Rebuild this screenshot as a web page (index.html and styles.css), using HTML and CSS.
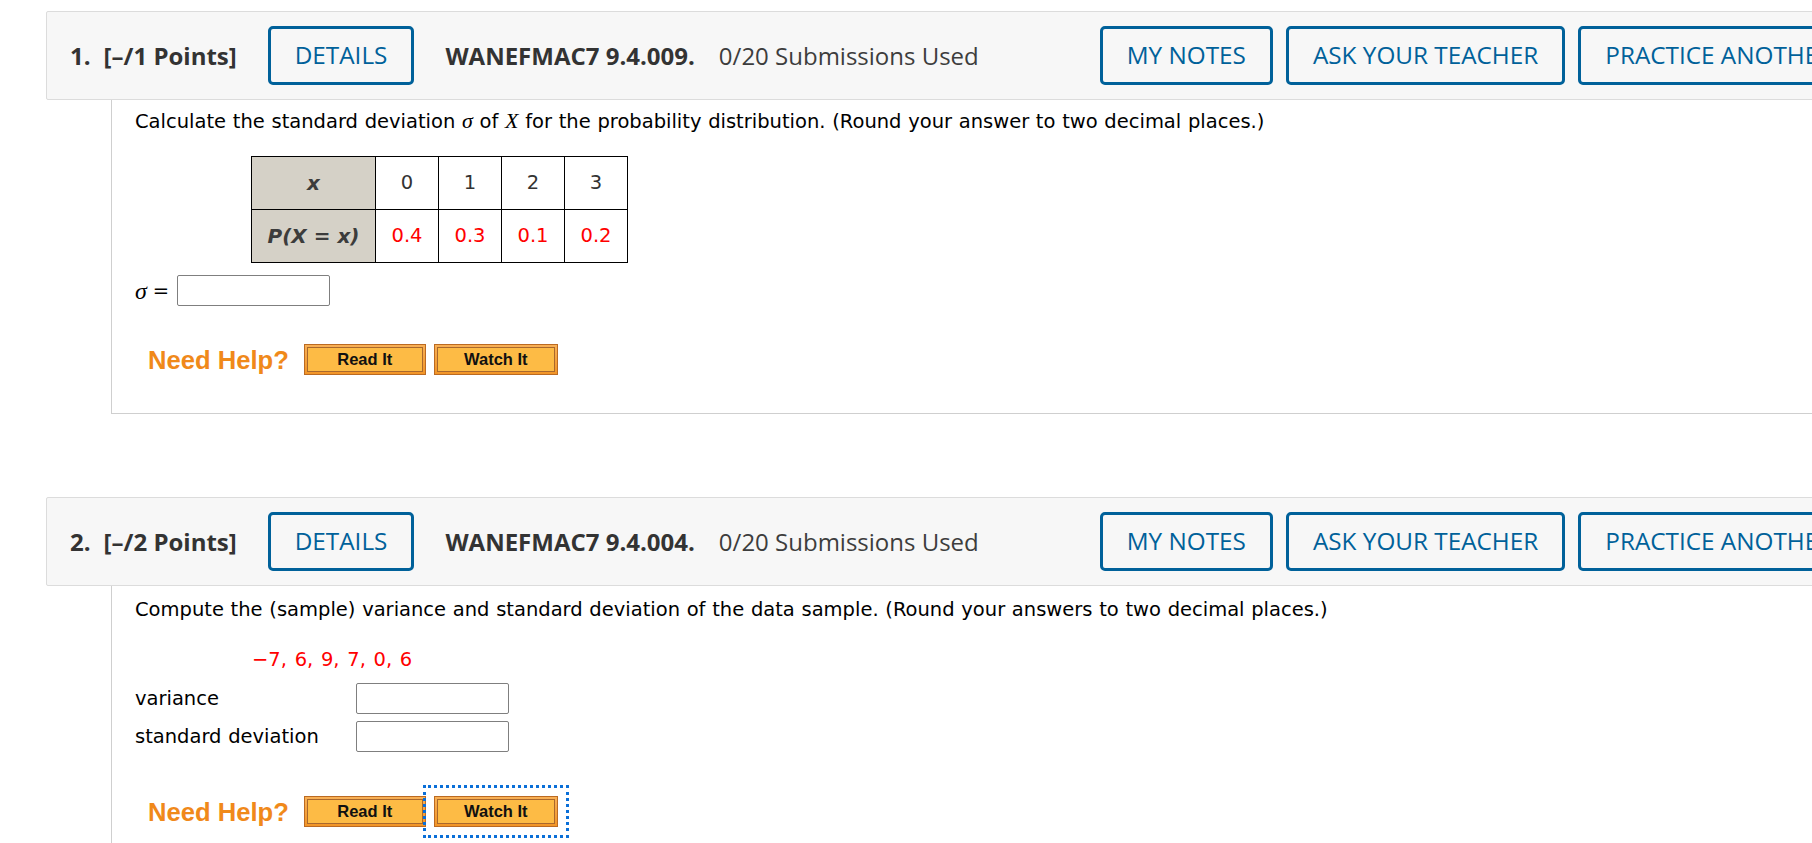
FILE: index.html
```html
<!DOCTYPE html>
<html lang="en">
<head>
<meta charset="utf-8">
<title>Questions</title>
<link rel="stylesheet" href="styles.css">
</head>
<body>
<div class="page">

  <section class="question">
    <div class="qhead">
      <span class="qnum">1.</span>
      <span class="qpts">[–/1 Points]</span>
      <button class="obtn">DETAILS</button>
      <span class="qcode">WANEFMAC7 9.4.009.</span>
      <span class="qsub">0/20 Submissions Used</span>
      <div class="qactions">
        <button class="obtn">MY NOTES</button>
        <button class="obtn">ASK YOUR TEACHER</button>
        <button class="obtn">PRACTICE ANOTHER</button>
      </div>
    </div>
    <div class="qbody">
      <p class="prompt">Calculate the standard deviation <span class="mvar">σ</span> of <span class="mvar">X</span> for the probability distribution. (Round your answer to two decimal places.)</p>
      <table class="dist">
        <tr>
          <th><i>x</i></th>
          <td>0</td><td>1</td><td>2</td><td>3</td>
        </tr>
        <tr>
          <th><i>P</i>(<i>X</i> = <i>x</i>)</th>
          <td class="red">0.4</td><td class="red">0.3</td><td class="red">0.1</td><td class="red">0.2</td>
        </tr>
      </table>
      <div class="answer">
        <span class="mvar big">σ</span><span class="eq">=</span><input class="ans" type="text">
      </div>
      <div class="help">
        <span class="needhelp">Need Help?</span>
        <button class="hbtn read"><span>Read It</span></button>
        <button class="hbtn watch"><span>Watch It</span></button>
      </div>
    </div>
  </section>

  <section class="question second">
    <div class="qhead">
      <span class="qnum">2.</span>
      <span class="qpts">[–/2 Points]</span>
      <button class="obtn">DETAILS</button>
      <span class="qcode">WANEFMAC7 9.4.004.</span>
      <span class="qsub">0/20 Submissions Used</span>
      <div class="qactions">
        <button class="obtn">MY NOTES</button>
        <button class="obtn">ASK YOUR TEACHER</button>
        <button class="obtn">PRACTICE ANOTHER</button>
      </div>
    </div>
    <div class="qbody">
      <p class="prompt">Compute the (sample) variance and standard deviation of the data sample. (Round your answers to two decimal places.)</p>
      <p class="data">−7, 6, 9, 7, 0, 6</p>
      <div class="fields">
        <label class="flabel">variance</label><input class="ans" type="text">
        <label class="flabel">standard deviation</label><input class="ans" type="text">
      </div>
      <div class="help help2">
        <span class="needhelp">Need Help?</span>
        <button class="hbtn read"><span>Read It</span></button>
        <button class="hbtn watch focused"><span>Watch It</span></button>
      </div>
    </div>
  </section>

</div>
</body>
</html>
```

FILE: styles.css
```css
html {
  overflow: hidden;
}

body {
  margin: 0;
  background: #ffffff;
  font-family: "DejaVu Sans", Verdana, sans-serif;
  color: #000;
}

.page {
  padding: 11px 0 0 46px;
}

.second {
  margin-top: 83px;
}

/* header bar */
.qhead {
  display: flex;
  align-items: center;
  width: max-content;
  min-width: 100%;
  box-sizing: border-box;
  padding: 14px 23px;
  background: #f7f7f7;
  border: 1px solid #dcdcdc;
  border-radius: 2px;
  font-family: "Open Sans", sans-serif;
  font-size: 24px;
  color: #333;
}

.qnum {
  font-weight: 700;
}

.qpts {
  font-weight: 700;
  margin-left: 13px;
  margin-right: 31px;
}

.qcode {
  font-weight: 700;
  margin-left: 31px;
  margin-right: 24px;
}

.qsub {
  color: #3d3d3d;
}

.qactions {
  display: flex;
  gap: 13px;
  margin-left: 121px;
}

.obtn {
  height: 59px;
  padding: 0 24px;
  border: 3px solid #00619a;
  border-radius: 5px;
  background: transparent;
  color: #00619a;
  font-family: "Open Sans", sans-serif;
  font-size: 24.3px;
  line-height: 1;
  white-space: nowrap;
  cursor: pointer;
}

/* body */
.qbody {
  margin-left: 65px;
  padding: 9px 0 38px 23px;
  border-left: 1px solid #cfcfcf;
  border-bottom: 1px solid #cfcfcf;
  font-size: 19.5px;
  line-height: 24px;
  word-spacing: 0.5px;
}

.second .qbody {
  padding-top: 12px;
}

.prompt {
  margin: 0;
}

.mvar {
  font-family: "Liberation Serif", "Times New Roman", serif;
  font-style: italic;
  font-size: 22px;
}

.mvar.big {
  font-size: 24px;
}

.dist {
  margin: 22px 0 0 116px;
  border-collapse: collapse;
  font-size: 19.5px;
  word-spacing: 0;
}

.dist th,
.dist td {
  height: 52px;
  padding: 0;
  border: 1px solid #000;
  text-align: center;
  vertical-align: middle;
}

.dist th {
  width: 123px;
  background: #d5d1c7;
  color: #3c3c3c;
  font-weight: 700;
  font-style: italic;
  font-size: 20px;
}

.dist td {
  width: 62px;
  color: #333;
}

.dist td.red {
  color: #ff0000;
}

.answer {
  display: flex;
  align-items: center;
  margin-top: 12px;
}

.eq {
  margin: 0 8px 0 6px;
}

.ans {
  width: 153px;
  height: 31px;
  box-sizing: border-box;
  margin: 0;
  border: 1px solid #7f7f7f;
  border-radius: 2px;
  background: #fff;
}

.help {
  display: flex;
  align-items: center;
  margin-top: 38px;
}

.help2 {
  margin-top: 44px;
}

.needhelp {
  margin: 0 15px 0 13px;
  font-family: "Liberation Sans", Arial, sans-serif;
  font-weight: 700;
  font-size: 25.6px;
  word-spacing: 0;
  color: #f0891a;
}

.hbtn {
  height: 31px;
  padding: 2px;
  margin: 0 8px 0 0;
  border: 1px solid #bb6a22;
  background: linear-gradient(#f8b056, #f29527);
  cursor: pointer;
}

.hbtn span {
  display: flex;
  align-items: center;
  justify-content: center;
  height: 100%;
  box-sizing: border-box;
  border: 1px solid #a9682d;
  background: #fdbb45;
  font-family: "Liberation Sans", Arial, sans-serif;
  font-weight: 700;
  font-size: 16.5px;
  word-spacing: 0;
  color: #111;
}

.read {
  width: 122px;
}

.watch {
  width: 124px;
}

.focused {
  outline: 3px dotted #0a6fd8;
  outline-offset: 8px;
}

.data {
  margin: 26px 0 0 117px;
  color: #ff0000;
  word-spacing: 1.5px;
}

.fields {
  display: grid;
  grid-template-columns: 221px 153px;
  align-items: center;
  row-gap: 7px;
  margin-top: 11px;
}
```
